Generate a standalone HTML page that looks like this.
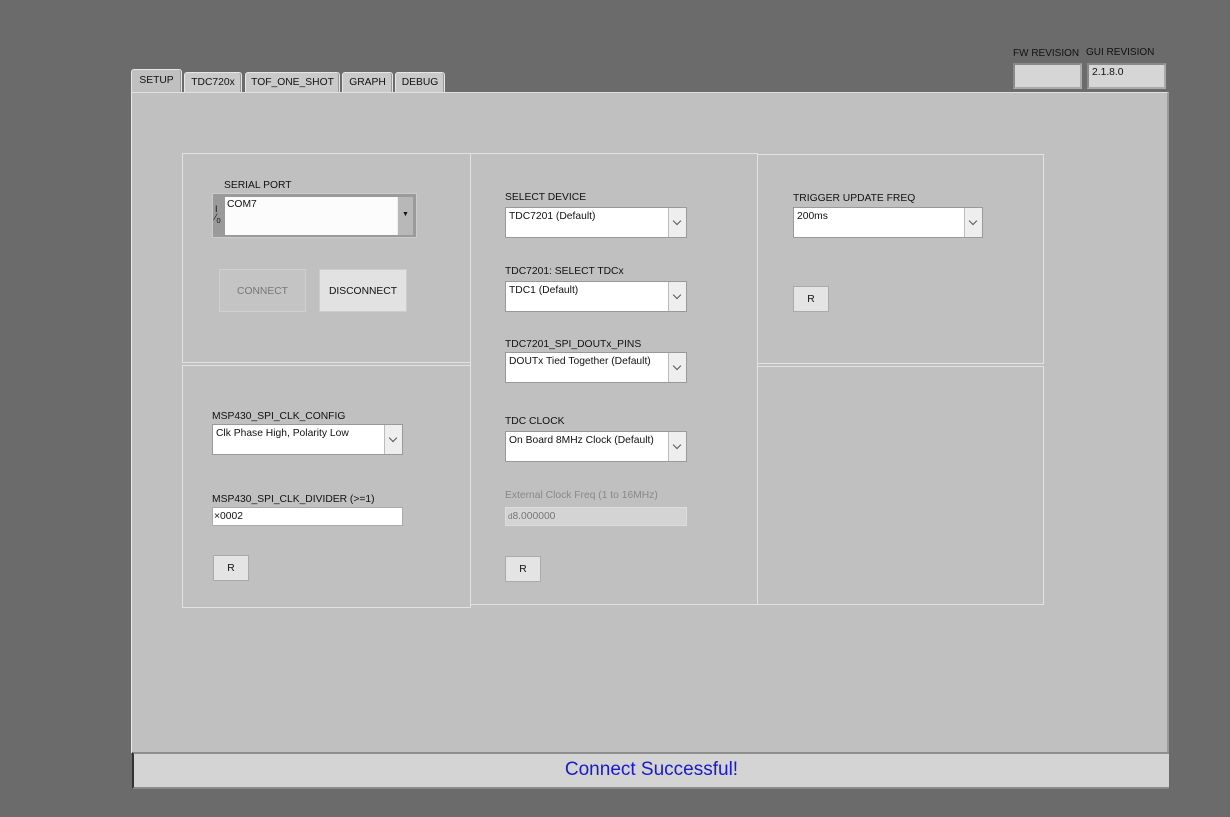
<!DOCTYPE html>
<html><head><style>
*{margin:0;padding:0;box-sizing:border-box}
body{width:1230px;height:817px;background:#6b6b6b;position:relative;overflow:hidden;font-family:"Liberation Sans",Tahoma,sans-serif;font-size:10.3px;color:#111}
.a{position:absolute}
.tab{position:absolute;top:72px;height:21px;background:#cacaca;border:1px solid #e6e6e6;border-bottom:none;border-radius:3px 3px 0 0;box-shadow:inset -1px 0 #9a9a9a;text-align:center;line-height:20px;font-size:10.3px}
.box{position:absolute;border:1px solid #e2e2e2}
.lbl{position:absolute;font-size:10.3px;color:#111;top:0}
.dd{position:absolute;background:#fff;border:1px solid #999;height:31px;font-size:10.3px;padding:3px 0 0 3px}
.dd .b{position:absolute;right:0;top:0;width:18px;height:29px;background:#eee;border-left:1px solid #bbb}
.dd .b:after{content:"";position:absolute;left:5px;top:10px;width:5px;height:5px;border-right:1px solid #555;border-bottom:1px solid #555;transform:rotate(45deg)}
.btn{position:absolute;background:#e4e4e4;border:1px solid #aaa;text-align:center;font-size:10.3px}
</style></head><body>
<div class="tab" style="left:131px;top:69px;width:51px;height:25px;background:#c0c0c0;line-height:22px">SETUP</div>
<div class="tab" style="left:184px;width:58px">TDC720x</div>
<div class="tab" style="left:245px;width:95px">TOF_ONE_SHOT</div>
<div class="tab" style="left:342px;width:51px">GRAPH</div>
<div class="tab" style="left:395px;width:50px">DEBUG</div>
<div class="a" style="left:131px;top:92px;width:1038px;height:661px;background:#c0c0c0;border-top:1px solid #e0e0e0;border-left:1px solid #e8e8e8;border-right:2px solid #9a9a9a"></div>
<div class="a" style="left:132px;top:752px;width:1037px;height:37px;background:#d4d4d4;border-top:2px solid #8e8e8e;border-left:2px solid #333;border-bottom:2px solid #8a8a8a;text-align:center;font-size:19px;color:#1a1acc;line-height:32px">Connect Successful!</div>
<div class="lbl" style="left:1013px;top:48px;font-size:10px">FW REVISION</div>
<div class="lbl" style="left:1086px;top:47px;font-size:10px">GUI REVISION</div>
<div class="a" style="left:1013px;top:63px;width:69px;height:26px;background:#d6d6d6;border:2px solid #8a8a8a;border-right-color:#aaa;border-bottom-color:#aaa"></div>
<div class="a" style="left:1087px;top:63px;width:79px;height:26px;background:#d6d6d6;border:2px solid #8a8a8a;border-right-color:#aaa;border-bottom-color:#aaa;padding:2px 3px;font-size:10.3px">2.1.8.0</div>

<div class="box" style="left:182px;top:153px;width:289px;height:210px"></div>
<div class="box" style="left:182px;top:365px;width:289px;height:243px"></div>
<div class="box" style="left:470px;top:153px;width:288px;height:452px"></div>
<div class="box" style="left:757px;top:154px;width:287px;height:210px"></div>
<div class="box" style="left:757px;top:366px;width:287px;height:239px"></div>

<div class="lbl" style="left:224px;top:180px">SERIAL PORT</div>
<div class="a" style="left:212px;top:193px;width:205px;height:45px;background:#9a9a9a;border:1px solid #ccc"></div>
<div class="a" style="left:215px;top:197px;width:10px;height:38px;font-size:9px;line-height:8px;padding-top:8px">I<br>⁄<sub>0</sub></div>
<div class="a" style="left:225px;top:197px;width:172px;height:38px;background:#fcfcfc;padding:2px 2px;font-size:10.3px">COM7</div>
<div class="a" style="left:397px;top:197px;width:16px;height:38px;background:#b8b8b8;border-left:1px solid #eee;font-size:7px;text-align:center;line-height:36px">▼</div>
<div class="btn" style="left:219px;top:269px;width:87px;height:43px;line-height:43px;background:#c4c4c4;border-color:#d0d0d0;color:#777">CONNECT</div>
<div class="btn" style="left:319px;top:269px;width:88px;height:43px;line-height:43px;background:#e2e2e2;border-color:#ccc">DISCONNECT</div>

<div class="lbl" style="left:212px;top:411px">MSP430_SPI_CLK_CONFIG</div>
<div class="dd" style="left:212px;top:424px;width:191px">Clk Phase High, Polarity Low<div class="b"></div></div>
<div class="lbl" style="left:212px;top:494px">MSP430_SPI_CLK_DIVIDER (&gt;=1)</div>
<div class="a" style="left:212px;top:507px;width:191px;height:19px;background:#fff;border:1px solid #aaa;padding:3px 1px;font-size:10.3px">×0002</div>
<div class="btn" style="left:213px;top:555px;width:36px;height:26px;line-height:26px">R</div>

<div class="lbl" style="left:505px;top:192px">SELECT DEVICE</div>
<div class="dd" style="left:505px;top:207px;width:182px">TDC7201 (Default)<div class="b"></div></div>
<div class="lbl" style="left:505px;top:266px">TDC7201: SELECT TDCx</div>
<div class="dd" style="left:505px;top:281px;width:182px">TDC1 (Default)<div class="b"></div></div>
<div class="lbl" style="left:505px;top:339px">TDC7201_SPI_DOUTx_PINS</div>
<div class="dd" style="left:505px;top:352px;width:182px">DOUTx Tied Together (Default)<div class="b"></div></div>
<div class="lbl" style="left:505px;top:416px">TDC CLOCK</div>
<div class="dd" style="left:505px;top:431px;width:182px">On Board 8MHz Clock (Default)<div class="b"></div></div>
<div class="lbl" style="left:505px;top:490px;color:#888">External Clock Freq (1 to 16MHz)</div>
<div class="a" style="left:505px;top:507px;width:182px;height:19px;background:#d4d4d4;border:1px solid #ddd;padding:3px 2px;font-size:10.3px;color:#777"><span style="font-size:8px">d</span>8.000000</div>
<div class="btn" style="left:505px;top:556px;width:36px;height:26px;line-height:26px">R</div>

<div class="lbl" style="left:793px;top:193px">TRIGGER UPDATE FREQ</div>
<div class="dd" style="left:793px;top:207px;width:190px">200ms<div class="b"></div></div>
<div class="btn" style="left:793px;top:286px;width:36px;height:26px;line-height:26px">R</div>
</body></html>
